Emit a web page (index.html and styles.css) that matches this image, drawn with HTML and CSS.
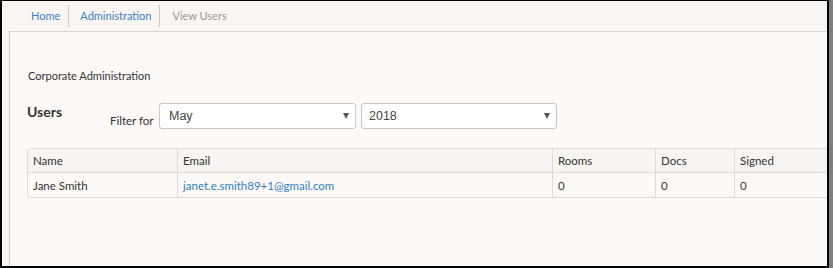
FILE: index.html
```html
<!DOCTYPE html>
<html lang="en">

<head>
    <meta charset="UTF-8">
    <title>View Users</title>
    <link rel="stylesheet" href="styles.css">
</head>

<body>
    <div class="window">
        <nav class="breadcrumb">
            <a href="#" class="crumb">Home</a>
            <a href="#" class="crumb">Administration</a>
            <span class="crumb current">View Users</span>
        </nav>

        <div class="panel">
            <div class="section-title">Corporate Administration</div>

            <div class="toolbar">
                <h2 class="heading">Users</h2>
                <label class="filter-label">Filter for</label>
                <div class="select-box month">
                    <span class="select-value">May</span>
                    <span class="select-arrow"></span>
                </div>
                <div class="select-box year">
                    <span class="select-value">2018</span>
                    <span class="select-arrow"></span>
                </div>
            </div>

            <table class="users">
                <thead>
                    <tr>
                        <th class="col-name">Name</th>
                        <th class="col-email">Email</th>
                        <th class="col-rooms">Rooms</th>
                        <th class="col-docs">Docs</th>
                        <th class="col-signed">Signed</th>
                    </tr>
                </thead>
                <tbody>
                    <tr>
                        <td>Jane Smith</td>
                        <td><a href="#">janet.e.smith89+1@gmail.com</a></td>
                        <td class="num">0</td>
                        <td class="num">0</td>
                        <td class="num">0</td>
                    </tr>
                </tbody>
            </table>
        </div>
    </div>
</body>

</html>
```

FILE: styles.css
```css
* {
    margin: 0;
    padding: 0;
    box-sizing: border-box;
}

body {
    background: #7f7f7f;
    font-family: 'Lato', sans-serif;
    font-size: 12px;
    color: #333;
    width: 833px;
    height: 268px;
    overflow: hidden;
}

.window {
    width: 829px;
    height: 268px;
    border-style: solid;
    border-color: #000;
    border-width: 1px 2px 2px 2px;
    background: #f8f5f2;
    display: flex;
    flex-direction: column;
    overflow: hidden;
}

/* Barra de navegação */
.breadcrumb {
    height: 30px;
    display: flex;
    align-items: center;
    padding-left: 21px;
    flex-shrink: 0;
}

.crumb {
    color: #3b7ec8;
    text-decoration: none;
    padding: 0 8px 0 11px;
    font-size: 11px;
    line-height: 16px;
    border-left: 1px solid #cfcbc8;
    height: 22px;
    display: flex;
    align-items: center;
}

.crumb:first-child {
    border-left: none;
    padding-left: 8px;
}

.crumb.current {
    color: #9a9896;
    padding-left: 12px;
}

.panel {
    flex: 1;
    margin-left: 7px;
    background: #fdf9f7;
    border-top: 1px solid #d8d5d2;
    border-left: 1px solid #d0cdca;
    padding: 37px 0 0 17px;
    overflow: hidden;
}

.section-title {
    font-size: 11px;
    margin-left: 1px;
    line-height: 14px;
}

.toolbar {
    display: flex;
    align-items: flex-start;
    margin-top: 20px;
}

.heading {
    font-size: 14px;
    font-weight: bold;
    width: 83px;
    line-height: 18px;
    margin-top: 0px;
}

.filter-label {
    font-size: 11.5px;
    margin-top: 11px;
    width: 49px;
}

.select-box {
    height: 26px;
    border: 1px solid #c8c8c8;
    border-radius: 3px;
    background: #fff;
    display: flex;
    align-items: center;
    justify-content: space-between;
    padding: 0 6px 0 9px;
    font-family: 'Liberation Sans', Arial, sans-serif;
    font-size: 12.5px;
    color: #444;
}

.select-box.month {
    width: 197px;
}

.select-box.year {
    width: 196px;
    margin-left: 5px;
    padding-left: 7px;
}

.select-arrow {
    width: 0;
    height: 0;
    border-left: 3.5px solid transparent;
    border-right: 3.5px solid transparent;
    border-top: 6px solid #555;
}

/* Tabela */
.users {
    margin-top: 19px;
    width: 830px;
    border-collapse: separate;
    border-spacing: 0;
    border: 1px solid #dddad7;
    border-radius: 3px;
    table-layout: fixed;
}

.users th,
.users td {
    text-align: left;
    font-weight: normal;
    height: 24px;
    padding: 0 5px;
    font-size: 11.5px;
    border-left: 1px solid #dddad7;
}

.users th:first-child,
.users td:first-child {
    border-left: none;
}

.users th {
    background: #f7f4f1;
    border-bottom: 1px solid #dddad7;
}

.users td a {
    color: #2f7fc6;
    text-decoration: none;
}

.users td.num {
    color: #3a3632;
}

.col-name { width: 149px; }
.col-email { width: 375px; }
.col-rooms { width: 103px; }
.col-docs { width: 79px; }
.col-signed { width: 124px; }
```
